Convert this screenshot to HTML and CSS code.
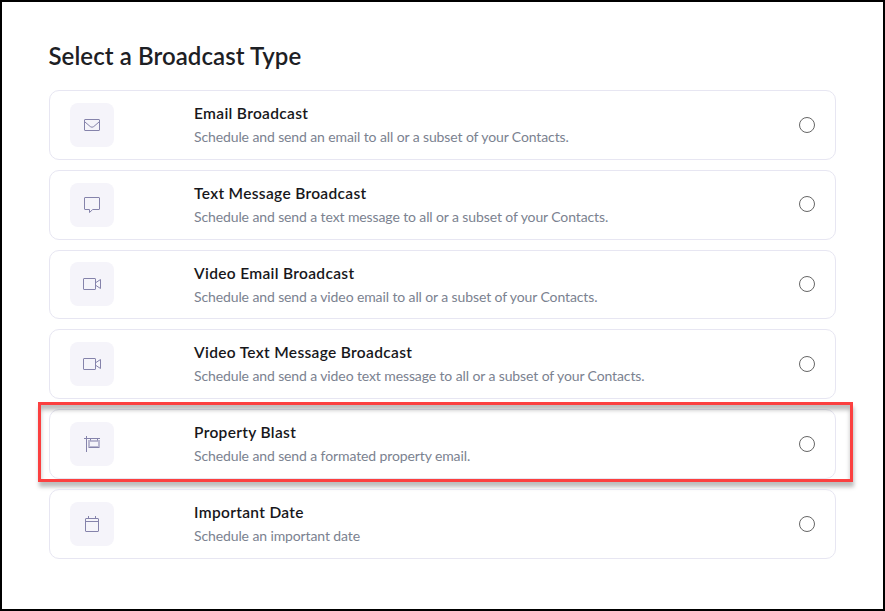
FILE: index.html
```html
<!DOCTYPE html>
<html>
	<head>
		<meta charset="UTF-8">
		<title>Select a Broadcast Type</title>
		<link rel="stylesheet" href="styles.css">
	</head>
	<body>

		<div class="page">
			<h1>Select a Broadcast Type</h1>

			<ul class="types">
				<li>
					<div class="icon">
						<svg width="20" height="20" viewBox="0 0 20 20"><rect x="2.5" y="4.5" width="15" height="11" rx="0.5"/><path d="M3 7l5.3 4.6q1.7 1.3 3.4 0L17 7"/></svg>
					</div>
					<div class="text">
						<h2>Email Broadcast</h2>
						<p>Schedule and send an email to all or a subset of your Contacts.</p>
					</div>
					<span class="radio"></span>
				</li>
				<li>
					<div class="icon">
						<svg width="20" height="20" viewBox="0 0 20 20"><path d="M3 2.5h14q.5 0 .5.5v11q0 .5-.5.5h-6.3l-3.2 3v-3H3q-.5 0-.5-.5V3q0-.5.5-.5z"/></svg>
					</div>
					<div class="text">
						<h2>Text Message Broadcast</h2>
						<p>Schedule and send a text message to all or a subset of your Contacts.</p>
					</div>
					<span class="radio"></span>
				</li>
				<li>
					<div class="icon">
						<svg width="20" height="20" viewBox="0 0 20 20"><rect x="1.5" y="4.5" width="12" height="11" rx="0.5"/><path d="M13.5 8.8l5-3.3v9l-5-3.3"/></svg>
					</div>
					<div class="text">
						<h2>Video Email Broadcast</h2>
						<p>Schedule and send a video email to all or a subset of your Contacts.</p>
					</div>
					<span class="radio"></span>
				</li>
				<li>
					<div class="icon">
						<svg width="20" height="20" viewBox="0 0 20 20"><rect x="1.5" y="4.5" width="12" height="11" rx="0.5"/><path d="M13.5 8.8l5-3.3v9l-5-3.3"/></svg>
					</div>
					<div class="text">
						<h2>Video Text Message Broadcast</h2>
						<p>Schedule and send a video text message to all or a subset of your Contacts.</p>
					</div>
					<span class="radio"></span>
				</li>
				<li class="marked">
					<div class="icon">
						<svg width="20" height="20" viewBox="0 0 20 20"><path class="soft" d="M7 7h10v6H7z"/><path d="M4.5 2v16M2 4.5h16M8.5 4.5v2M15.5 4.5v2M7 13.5h10"/></svg>
					</div>
					<div class="text">
						<h2>Property Blast</h2>
						<p>Schedule and send a formated property email.</p>
					</div>
					<span class="radio"></span>
				</li>
				<li>
					<div class="icon">
						<svg width="20" height="20" viewBox="0 0 20 20"><rect x="3.5" y="4.5" width="13" height="13" rx="0.5"/><path d="M3.5 7.5h13M6.5 2v2.5M13.5 2v2.5"/></svg>
					</div>
					<div class="text">
						<h2>Important Date</h2>
						<p>Schedule an important date</p>
					</div>
					<span class="radio"></span>
				</li>
			</ul>
		</div>

	</body>
</html>
```
FILE: styles.css
```css
*{padding: 0;margin: 0;box-sizing: border-box;}

body{font-family: Lato, sans-serif;background: #fff;}

li{list-style: none;}

.page{height: 611px;border: 2px solid #000;padding: 38px 47px 0;overflow: hidden;}

.page h1{height: 50px;line-height: 32px;font-size: 24px;font-weight: 600;color: #1d2024;white-space: nowrap;letter-spacing: .08px;margin-left: -.5px;}

.types{display: flex;flex-direction: column;gap: 10px;}
.types>li{position: relative;display: flex;align-items: center;height: 69.8px;border: 1px solid #e7e6f2;border-radius: 10px;padding: 0 20px;}

.icon{display: flex;align-items: center;justify-content: center;width: 44px;height: 44px;border-radius: 8px;background: #f5f4fa;}
.icon svg{fill: none;stroke: #8583ab;stroke-width: 1;}
.icon .soft{stroke: #b9b7d0;stroke-width: 2;}

.text{flex: 1;margin-left: 80px;padding-top: .4px;}
.text h2{line-height: 24px;font-size: 15.5px;font-weight: 600;color: #17171b;letter-spacing: .33px;}
.text p{line-height: 24px;font-size: 14px;color: #7b8290;letter-spacing: -.11px;}

.radio{width: 16px;height: 16px;margin: 0 0 .5px 0;border: 1.5px solid #666;border-radius: 50%;}

/* red callout around one row */
.types>.marked::after{content: "";position: absolute;left: -12px;right: -18px;top: -8px;bottom: -4px;border: 3px solid #fb4040;box-shadow: 1px 5px 4px rgba(0,0,0,.26), inset 0 5px 4px rgba(0,0,0,.25);}
```
